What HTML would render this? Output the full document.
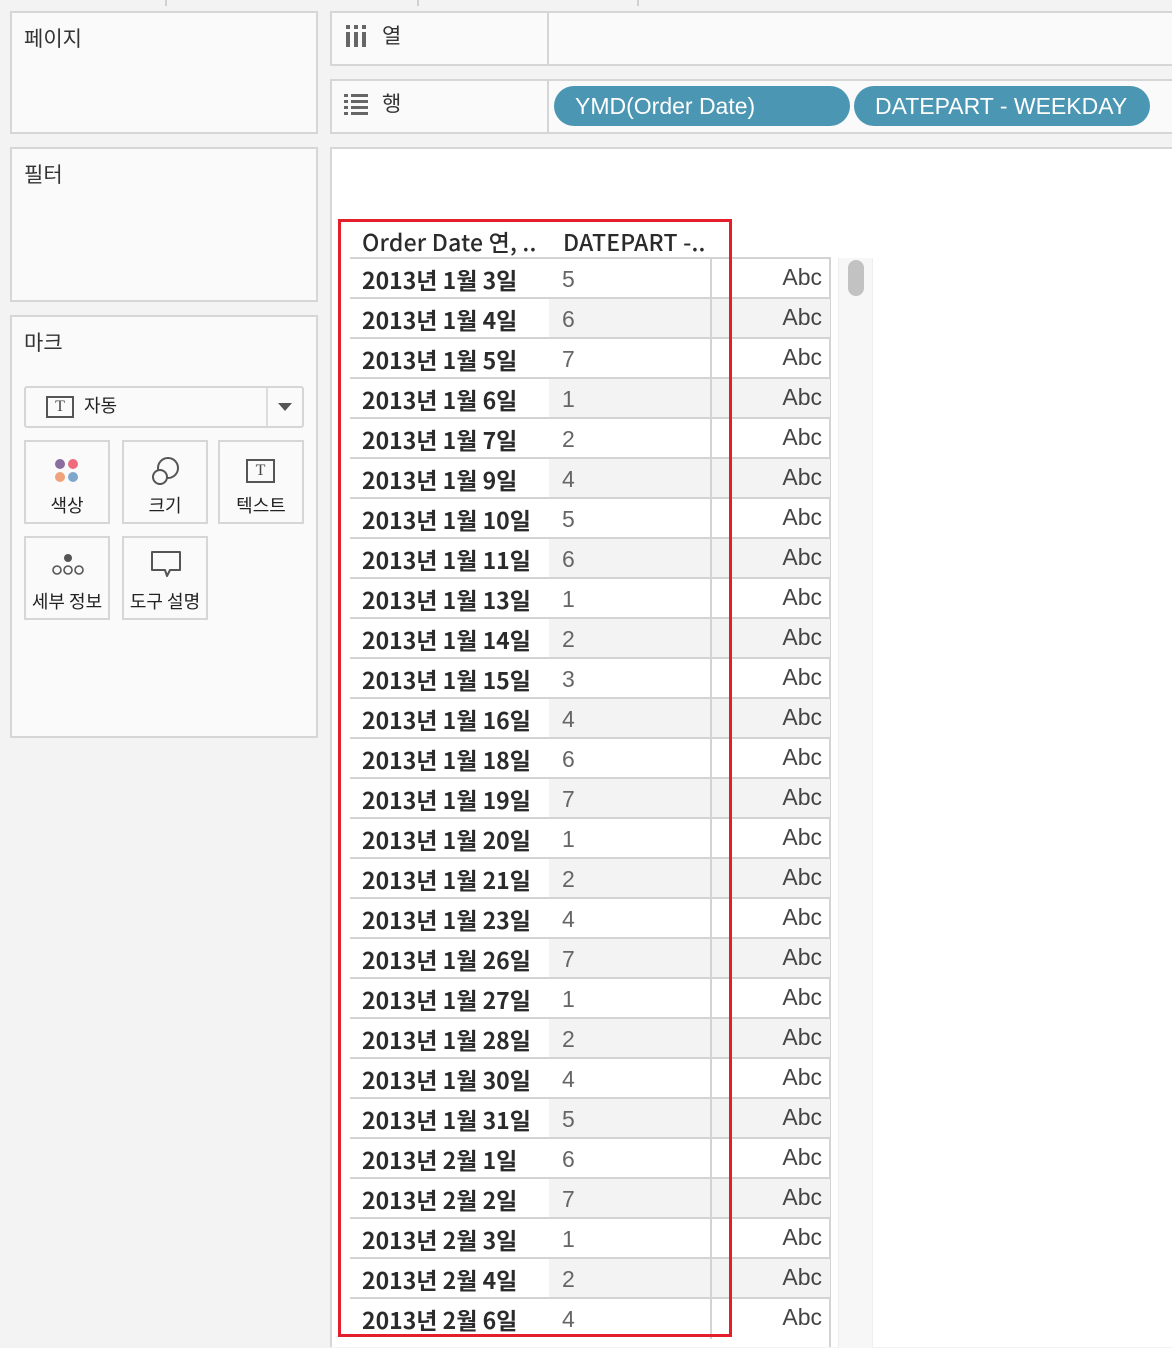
<!DOCTYPE html>
<html><head><meta charset="utf-8"><style>
*{margin:0;padding:0;box-sizing:border-box}
body{width:1172px;height:1338px;background:#f3f3f3;position:relative;overflow:hidden;font-family:"Liberation Sans","Noto Sans CJK KR",sans-serif;color:#333}
.a{position:absolute}
.panel{position:absolute;background:#fafafa;border:2px solid #d6d6d6}
.tt{position:absolute;font-size:21px;color:#333;font-family:"Noto Sans CJK KR",sans-serif;line-height:28px}
.btn{position:absolute;background:#fafafa;border:2px solid #d6d6d6;width:86px;height:84px}
.btn .l{position:absolute;left:0;right:0;top:50px;text-align:center;font-size:18px;line-height:26px;color:#222;font-family:"Noto Sans CJK KR",sans-serif}
.pill{position:absolute;top:86px;height:40px;background:#4a96b3;border-radius:20px;color:#fff;font-size:23px;line-height:40px;padding-left:21px}
.row{position:absolute;left:350px;width:480px;height:40px;border-bottom:2px solid #d3d3d3}
.row .sh{position:absolute;left:199px;right:0;top:0;bottom:0;background:#f3f3f3}
.row .d{position:absolute;left:12px;top:0;line-height:40px;font-size:23px;font-weight:bold;color:#2b2b2b;font-family:"Noto Sans CJK KR",sans-serif;letter-spacing:0}
.row .n{position:absolute;left:212px;top:0;line-height:40px;font-size:23px;color:#666}
.row .v{position:absolute;left:360px;top:0;bottom:0;width:2px;background:#d3d3d3}
.row .c{position:absolute;right:8px;top:-2px;line-height:40px;font-size:23px;color:#444}
.hd{position:absolute;top:224px;line-height:34px;font-size:23px;font-weight:500;color:#2b2b2b;font-family:'Noto Sans CJK KR',sans-serif;letter-spacing:0.2px}
</style></head><body>
<div class="a" style="left:165px;top:0;width:2px;height:6px;background:#d0d0d0"></div>
<div class="a" style="left:417px;top:0;width:2px;height:6px;background:#d0d0d0"></div>
<div class="a" style="left:637px;top:0;width:2px;height:6px;background:#d0d0d0"></div>

<div class="panel" style="left:10px;top:11px;width:308px;height:123px"></div>
<div class="tt" style="left:24px;top:24px">페이지</div>
<div class="panel" style="left:10px;top:147px;width:308px;height:155px"></div>
<div class="tt" style="left:24px;top:160px">필터</div>
<div class="panel" style="left:10px;top:315px;width:308px;height:423px"></div>
<div class="tt" style="left:24px;top:328px">마크</div>

<div class="a" style="left:24px;top:386px;width:280px;height:42px;border:2px solid #d6d6d6;border-radius:3px;background:#fafafa"></div>
<div class="a" style="left:46px;top:396px;width:28px;height:22px;border:2px solid #555;font-family:'Liberation Serif',serif;font-size:16px;text-align:center;line-height:18px;color:#444">T</div>
<div class="a" style="left:84px;top:392px;font-size:18px;line-height:26px;color:#222;font-family:'Noto Sans CJK KR',sans-serif">자동</div>
<div class="a" style="left:266px;top:388px;width:2px;height:38px;background:#ddd"></div>
<div class="a" style="left:278px;top:403px;border-left:7px solid transparent;border-right:7px solid transparent;border-top:8px solid #555"></div>

<div class="btn" style="left:24px;top:440px">
<svg class="a" style="left:26px;top:14px" width="30" height="30"><circle cx="8" cy="8" r="5" fill="#8a6f9e"/><circle cx="21" cy="8" r="5" fill="#ef6b7b"/><circle cx="8" cy="21" r="5" fill="#f0a27a"/><circle cx="21" cy="21" r="5" fill="#7fa6cc"/></svg>
<div class="l">색상</div></div>
<div class="btn" style="left:122px;top:440px">
<svg class="a" style="left:24px;top:12px" width="34" height="34"><circle cx="20" cy="14" r="10" fill="none" stroke="#555" stroke-width="2"/><circle cx="12" cy="23" r="7" fill="#fafafa" stroke="#555" stroke-width="2"/></svg>
<div class="l">크기</div></div>
<div class="btn" style="left:218px;top:440px">
<div class="a" style="left:26px;top:17px;width:29px;height:24px;border:2px solid #555;font-family:'Liberation Serif',serif;font-size:16px;text-align:center;line-height:20px;color:#444">T</div>
<div class="l">텍스트</div></div>
<div class="btn" style="left:24px;top:536px">
<svg class="a" style="left:22px;top:14px" width="40" height="28"><circle cx="20" cy="6" r="4" fill="#555"/><circle cx="9" cy="18" r="4" fill="none" stroke="#555" stroke-width="1.6"/><circle cx="20" cy="18" r="4" fill="none" stroke="#555" stroke-width="1.6"/><circle cx="31" cy="18" r="4" fill="none" stroke="#555" stroke-width="1.6"/></svg>
<div class="l">세부 정보</div></div>
<div class="btn" style="left:122px;top:536px">
<svg class="a" style="left:26px;top:12px" width="32" height="32"><path d="M2 2H30V20H20L17 26L15 20H2Z" fill="none" stroke="#555" stroke-width="2" stroke-linejoin="round"/></svg>
<div class="l">도구 설명</div></div>

<div class="panel" style="left:330px;top:11px;width:850px;height:55px"></div>
<div class="a" style="left:547px;top:11px;width:2px;height:55px;background:#d6d6d6"></div>
<svg class="a" style="left:345px;top:24px" width="24" height="24"><g fill="#666"><rect x="1" y="1" width="4" height="4"/><rect x="1" y="8" width="4" height="15"/><rect x="9" y="1" width="4" height="4"/><rect x="9" y="8" width="4" height="15"/><rect x="17" y="1" width="4" height="4"/><rect x="17" y="8" width="4" height="15"/></g></svg>
<div class="tt" style="left:382px;top:21px">열</div>

<div class="panel" style="left:330px;top:79px;width:850px;height:55px"></div>
<div class="a" style="left:547px;top:79px;width:2px;height:55px;background:#d6d6d6"></div>
<svg class="a" style="left:344px;top:93px" width="26" height="22"><g fill="#666"><rect x="0" y="1" width="4" height="3"/><rect x="7" y="1" width="17" height="3"/><rect x="0" y="7" width="4" height="3"/><rect x="7" y="7" width="17" height="3"/><rect x="0" y="13" width="4" height="3"/><rect x="7" y="13" width="17" height="3"/><rect x="0" y="19" width="4" height="3"/><rect x="7" y="19" width="17" height="3"/></g></svg>
<div class="tt" style="left:382px;top:89px">행</div>
<div class="pill" style="left:554px;width:296px">YMD(Order Date)</div>
<div class="pill" style="left:854px;width:296px">DATEPART - WEEKDAY</div>

<div class="a" style="left:330px;top:147px;width:850px;height:1200px;background:#fff;border-left:2px solid #d6d6d6;border-top:2px solid #d6d6d6"></div>
<div class="a" style="left:838px;top:258px;width:35px;height:1090px;background:#f7f7f7;border-left:1px solid #eee;border-right:1px solid #eee"></div>
<div class="a" style="left:848px;top:260px;width:16px;height:36px;background:#c2c2c2;border-radius:8px"></div>

<div class="hd" style="left:362px">Order Date 연, ..</div>
<div class="hd" style="left:563px">DATEPART -..</div>
<div class="a" style="left:350px;top:257px;width:480px;height:2px;background:#d3d3d3"></div>
<div class="a" style="left:829px;top:257px;width:2px;height:1090px;background:#d3d3d3"></div>

<div class="row" style="top:259px"><div class="v"></div><div class="d">2013년 1월 3일</div><div class="n">5</div><div class="c">Abc</div></div>
<div class="row" style="top:299px"><div class="sh"></div><div class="v"></div><div class="d">2013년 1월 4일</div><div class="n">6</div><div class="c">Abc</div></div>
<div class="row" style="top:339px"><div class="v"></div><div class="d">2013년 1월 5일</div><div class="n">7</div><div class="c">Abc</div></div>
<div class="row" style="top:379px"><div class="sh"></div><div class="v"></div><div class="d">2013년 1월 6일</div><div class="n">1</div><div class="c">Abc</div></div>
<div class="row" style="top:419px"><div class="v"></div><div class="d">2013년 1월 7일</div><div class="n">2</div><div class="c">Abc</div></div>
<div class="row" style="top:459px"><div class="sh"></div><div class="v"></div><div class="d">2013년 1월 9일</div><div class="n">4</div><div class="c">Abc</div></div>
<div class="row" style="top:499px"><div class="v"></div><div class="d">2013년 1월 10일</div><div class="n">5</div><div class="c">Abc</div></div>
<div class="row" style="top:539px"><div class="sh"></div><div class="v"></div><div class="d">2013년 1월 11일</div><div class="n">6</div><div class="c">Abc</div></div>
<div class="row" style="top:579px"><div class="v"></div><div class="d">2013년 1월 13일</div><div class="n">1</div><div class="c">Abc</div></div>
<div class="row" style="top:619px"><div class="sh"></div><div class="v"></div><div class="d">2013년 1월 14일</div><div class="n">2</div><div class="c">Abc</div></div>
<div class="row" style="top:659px"><div class="v"></div><div class="d">2013년 1월 15일</div><div class="n">3</div><div class="c">Abc</div></div>
<div class="row" style="top:699px"><div class="sh"></div><div class="v"></div><div class="d">2013년 1월 16일</div><div class="n">4</div><div class="c">Abc</div></div>
<div class="row" style="top:739px"><div class="v"></div><div class="d">2013년 1월 18일</div><div class="n">6</div><div class="c">Abc</div></div>
<div class="row" style="top:779px"><div class="sh"></div><div class="v"></div><div class="d">2013년 1월 19일</div><div class="n">7</div><div class="c">Abc</div></div>
<div class="row" style="top:819px"><div class="v"></div><div class="d">2013년 1월 20일</div><div class="n">1</div><div class="c">Abc</div></div>
<div class="row" style="top:859px"><div class="sh"></div><div class="v"></div><div class="d">2013년 1월 21일</div><div class="n">2</div><div class="c">Abc</div></div>
<div class="row" style="top:899px"><div class="v"></div><div class="d">2013년 1월 23일</div><div class="n">4</div><div class="c">Abc</div></div>
<div class="row" style="top:939px"><div class="sh"></div><div class="v"></div><div class="d">2013년 1월 26일</div><div class="n">7</div><div class="c">Abc</div></div>
<div class="row" style="top:979px"><div class="v"></div><div class="d">2013년 1월 27일</div><div class="n">1</div><div class="c">Abc</div></div>
<div class="row" style="top:1019px"><div class="sh"></div><div class="v"></div><div class="d">2013년 1월 28일</div><div class="n">2</div><div class="c">Abc</div></div>
<div class="row" style="top:1059px"><div class="v"></div><div class="d">2013년 1월 30일</div><div class="n">4</div><div class="c">Abc</div></div>
<div class="row" style="top:1099px"><div class="sh"></div><div class="v"></div><div class="d">2013년 1월 31일</div><div class="n">5</div><div class="c">Abc</div></div>
<div class="row" style="top:1139px"><div class="v"></div><div class="d">2013년 2월 1일</div><div class="n">6</div><div class="c">Abc</div></div>
<div class="row" style="top:1179px"><div class="sh"></div><div class="v"></div><div class="d">2013년 2월 2일</div><div class="n">7</div><div class="c">Abc</div></div>
<div class="row" style="top:1219px"><div class="v"></div><div class="d">2013년 2월 3일</div><div class="n">1</div><div class="c">Abc</div></div>
<div class="row" style="top:1259px"><div class="sh"></div><div class="v"></div><div class="d">2013년 2월 4일</div><div class="n">2</div><div class="c">Abc</div></div>
<div class="row" style="top:1299px;border-bottom:none"><div class="v"></div><div class="d">2013년 2월 6일</div><div class="n">4</div><div class="c">Abc</div></div>

<div class="a" style="left:338px;top:219px;width:394px;height:1118px;border:3px solid #e41e2b"></div>
</body></html>
